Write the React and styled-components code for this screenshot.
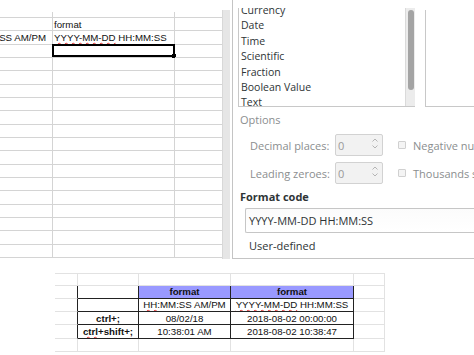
import React from "react";
import styled, { createGlobalStyle } from "styled-components";

const Global = createGlobalStyle`
  html, body { margin: 0; padding: 0; background: #fff; }
  #root { width: 474px; height: 355px; overflow: hidden; }
`;

const Page = styled.div`
  width: 474px;
  height: 355px;
  background: #fff;
  overflow: hidden;
  display: flex;
  flex-direction: column;
`;

const Top = styled.div`
  display: flex;
  height: 260px;
  flex: none;
  overflow: hidden;
`;

/* ---------- spreadsheet ---------- */
const Sheet = styled.div`
  width: 222px;
  height: 259px;
  flex: none;
  display: flex;
  flex-direction: column;
  padding-top: 12px;
  box-sizing: border-box;
  overflow: hidden;
  font-family: "Liberation Sans", Arial, sans-serif;
  font-size: 9.7px;
  color: #111;
`;

const Row = styled.div`
  display: grid;
  grid-template-columns: ${(p) => p.$cols};
  height: ${(p) => p.$h || 13.33}px;
  flex: none;
`;

const Cell = styled.div`
  position: relative;
  box-sizing: border-box;
  border-right: ${(p) => (p.$noRight ? "none" : "1px solid #d4d4d4")};
  border-bottom: 1px solid #d4d4d4;
  display: flex;
  align-items: center;
  justify-content: ${(p) => p.$align || "flex-start"};
  padding: 0 ${(p) => (p.$align ? "6px" : "1px")} 0 1px;
  white-space: nowrap;
  overflow: ${(p) => (p.$visible ? "visible" : "hidden")};
`;

const Squiggle = styled.span`
  text-decoration: underline wavy #e03030;
  text-decoration-thickness: 1px;
  text-underline-offset: 1px;
`;

const Cursor = styled.div`
  position: absolute;
  inset: -1px -1px 0 -1px;
  border: 2px solid #000;
  pointer-events: none;
`;

const Handle = styled.div`
  position: absolute;
  right: -3px;
  bottom: -3px;
  width: 4px;
  height: 4px;
  background: #000;
`;

const Band = styled.div`
  width: 7px;
  flex: none;
  margin-top: 10px;
  height: 249px;
  background: #e6e6e6;
  border-left: 1px solid #d8d8d8;
`;

const Spacer = styled.div`
  width: 2px;
  flex: none;
`;

/* ---------- dialog ---------- */
const Dialog = styled.div`
  flex: 1;
  box-sizing: border-box;
  height: 259px;
  border-left: 1px solid #c4c4c4;
  border-bottom: 1px solid #c4c4c4;
  background: #fff;
  display: flex;
  flex-direction: column;
  padding-left: 5px;
  font-family: "Open Sans", "Noto Sans", sans-serif;
  font-size: 11px;
  color: #2e3436;
  overflow: hidden;
`;

const Lists = styled.div`
  display: flex;
  gap: 10px;
  height: 99px;
  margin-top: 8px;
  flex: none;
`;

const ListBox = styled.div`
  width: 177px;
  flex: none;
  box-sizing: border-box;
  border-left: 1px solid #c8c8c8;
  border-bottom: 1px solid #c8c8c8;
  display: flex;
  overflow: hidden;
`;

const Items = styled.div`
  flex: 1;
  display: flex;
  flex-direction: column;
  margin-top: -5px;
  font-size: 10.5px;
`;

const Item = styled.div`
  height: 15.4px;
  line-height: 15.4px;
  padding-left: 2px;
  flex: none;
  white-space: nowrap;
`;

const Track = styled.div`
  width: 10px;
  flex: none;
  background: #ececec;
  border-left: 1px solid #dadada;
  padding-top: 2px;
  box-sizing: border-box;
  display: flex;
  justify-content: center;
`;

const Thumb = styled.div`
  width: 6px;
  height: 80px;
  border-radius: 3px;
  background: #a4a4a4;
`;

const Preview = styled.div`
  flex: 1;
  box-sizing: border-box;
  border-left: 1px solid #c8c8c8;
  border-bottom: 1px solid #c8c8c8;
  margin-top: 2px;
`;

const SectionLabel = styled.div`
  padding-left: 2px;
  margin-top: 5px;
  height: 16px;
  line-height: 16px;
  color: ${(p) => (p.$bold ? "#2e3436" : "#8b8e8f")};
  font-weight: ${(p) => (p.$bold ? 700 : 400)};
`;

const OptRow = styled.div`
  display: flex;
  align-items: center;
  height: 22px;
  margin-top: ${(p) => p.$mt || 0}px;
  color: #8b8e8f;
  white-space: nowrap;
`;

const OptLabel = styled.div`
  width: 97px;
  padding-left: 12px;
  box-sizing: border-box;
  flex: none;
`;

const Spin = styled.div`
  width: 48px;
  height: 22px;
  box-sizing: border-box;
  border: 1px solid #d2d2d2;
  border-radius: 2px;
  background: #f2f2f2;
  display: flex;
  align-items: center;
  padding-left: 2px;
  flex: none;
  position: relative;
  color: #9a9a9a;
`;

const Arrows = styled.div`
  position: absolute;
  right: 4px;
  top: 3px;
  display: flex;
  flex-direction: column;
  gap: 3px;
`;

const Check = styled.div`
  width: 8px;
  height: 8px;
  box-sizing: border-box;
  border: 1px solid #d0d0d0;
  border-radius: 1px;
  background: #f4f4f4;
  margin-left: 15px;
  margin-right: 7px;
  flex: none;
`;

const Input = styled.div`
  margin-left: 7px;
  margin-top: 3px;
  height: 25px;
  box-sizing: border-box;
  border: 1px solid #c6c6c6;
  border-right: none;
  border-radius: 2px 0 0 2px;
  background: linear-gradient(#fbfbfb, #ffffff);
  display: flex;
  align-items: center;
  padding-left: 3px;
  color: #2e3436;
`;

const Note = styled.div`
  padding-left: 11px;
  margin-top: 5px;
  height: 16px;
  line-height: 16px;
`;

/* ---------- lower table ---------- */
const Lower = styled.div`
  margin-top: 13px;
  margin-left: 55px;
  width: 330px;
  display: flex;
  flex-direction: column;
  border-top: 1px solid #e2e2e2;
  font-family: "Liberation Sans", Arial, sans-serif;
  font-size: 9.7px;
  color: #111;
`;

const TCell = styled.div`
  box-sizing: border-box;
  display: flex;
  align-items: center;
  justify-content: center;
  white-space: nowrap;
  overflow: hidden;
  border-right: 1px solid ${(p) => (p.$dark ? "#222" : "#e2e2e2")};
  border-bottom: 1px solid ${(p) => (p.$darkB ? "#222" : "#e2e2e2")};
  background: ${(p) => (p.$fill ? "#9999ff" : "transparent")};
  font-weight: ${(p) => (p.$bold ? 700 : 400)};
`;

const Arrow = ({ up }) => (
  <svg width="6" height="4" viewBox="0 0 6 4">
    <path
      d={up ? "M0.5 3.5 L3 1 L5.5 3.5" : "M0.5 0.5 L3 3 L5.5 0.5"}
      fill="none"
      stroke="#b5b5b5"
      strokeWidth="1"
    />
  </svg>
);

const SpinBox = () => (
  <Spin>
    0
    <Arrows>
      <Arrow up />
      <Arrow />
    </Arrows>
  </Spin>
);

const sheetCols = "53px 122px 1fr";
const lowerCols = "23px 61px 92px 123px 1fr";

const EmptyRow = () => (
  <Row $cols={sheetCols}>
    <Cell />
    <Cell />
    <Cell $noRight />
  </Row>
);

const LowerEmpty = ({ h }) => (
  <Row $cols={lowerCols} $h={h}>
    <TCell />
    <TCell />
    <TCell />
    <TCell />
    <TCell />
  </Row>
);

export default function App() {
  const rows = Array.from({ length: 15 });
  return (
    <Page>
      <Global />
      <Top>
        <Sheet>
          <Row $cols={sheetCols} $h={6}>
            <Cell />
            <Cell />
            <Cell $noRight />
          </Row>
          <Row $cols={sheetCols}>
            <Cell />
            <Cell>format</Cell>
            <Cell $noRight />
          </Row>
          <Row $cols={sheetCols}>
            <Cell $align="flex-end">HH:MM:SS AM/PM</Cell>
            <Cell>
              <Squiggle>YYYY-MM-DD</Squiggle>&nbsp;HH:MM:SS
            </Cell>
            <Cell $noRight />
          </Row>
          <Row $cols={sheetCols}>
            <Cell />
            <Cell $visible>
              <Cursor>
                <Handle />
              </Cursor>
            </Cell>
            <Cell $noRight />
          </Row>
          {rows.map((_, i) => (
            <EmptyRow key={i} />
          ))}
        </Sheet>
        <Band />
        <Spacer />
        <Dialog>
          <Lists>
            <ListBox>
              <Items>
                {[
                  "Currency",
                  "Date",
                  "Time",
                  "Scientific",
                  "Fraction",
                  "Boolean Value",
                  "Text",
                ].map((t) => (
                  <Item key={t}>{t}</Item>
                ))}
              </Items>
              <Track>
                <Thumb />
              </Track>
            </ListBox>
            <Preview />
          </Lists>
          <SectionLabel>Options</SectionLabel>
          <OptRow $mt={6}>
            <OptLabel>Decimal places:</OptLabel>
            <SpinBox />
            <Check />
            Negative numbers red
          </OptRow>
          <OptRow $mt={6}>
            <OptLabel>Leading zeroes:</OptLabel>
            <SpinBox />
            <Check />
            Thousands separator
          </OptRow>
          <SectionLabel $bold>Format code</SectionLabel>
          <Input>YYYY-MM-DD HH:MM:SS</Input>
          <Note>User-defined</Note>
        </Dialog>
      </Top>
      <Lower>
        <LowerEmpty h={11.5} />
        <Row $cols={lowerCols}>
          <TCell $dark />
          <TCell $dark $darkB />
          <TCell $dark $darkB $fill $bold>
            format
          </TCell>
          <TCell $dark $darkB $fill $bold>
            format
          </TCell>
          <TCell />
        </Row>
        <Row $cols={lowerCols}>
          <TCell $dark />
          <TCell $dark $darkB />
          <TCell $dark $darkB>
            <Squiggle>HH</Squiggle>:MM:SS AM/PM
          </TCell>
          <TCell $dark $darkB>
            <Squiggle>YYYY-MM-DD</Squiggle>&nbsp;HH:MM:SS
          </TCell>
          <TCell />
        </Row>
        <Row $cols={lowerCols}>
          <TCell $dark />
          <TCell $dark $darkB $bold>
            <Squiggle>ctrl</Squiggle>+;
          </TCell>
          <TCell $dark $darkB>
            08/02/18
          </TCell>
          <TCell $dark $darkB>
            2018-08-02 00:00:00
          </TCell>
          <TCell />
        </Row>
        <Row $cols={lowerCols}>
          <TCell $dark />
          <TCell $dark $darkB $bold>
            <Squiggle>ctrl</Squiggle>+shift+;
          </TCell>
          <TCell $dark $darkB>
            10:38:01 AM
          </TCell>
          <TCell $dark $darkB>
            2018-08-02 10:38:47
          </TCell>
          <TCell />
        </Row>
        <LowerEmpty />
      </Lower>
    </Page>
  );
}
